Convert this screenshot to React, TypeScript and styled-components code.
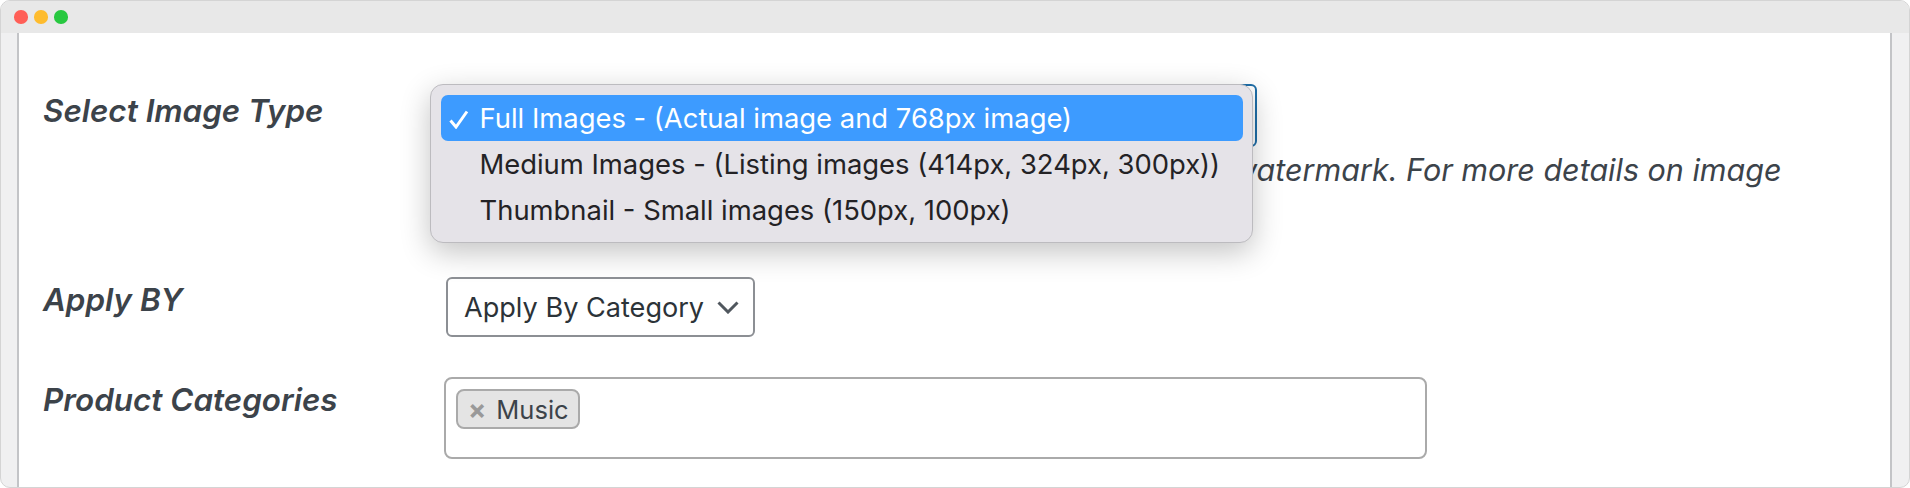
import { FC } from 'react'
import styled, { createGlobalStyle } from 'styled-components'

const Global = createGlobalStyle`
  html, body {
    margin: 0;
    padding: 0;
    background: #fff;
  }
  body {
    font-family: Inter, "Liberation Sans", sans-serif;
    color: #3c434a;
  }
`

const Window = styled.div`
  box-sizing: border-box;
  display: flex;
  flex-direction: column;
  width: 1910px;
  height: 488px;
  border: 1px solid #d4d4d4;
  border-radius: 10px;
  overflow: hidden;
  background: #f0f0f1;
`

const TitleBar = styled.div`
  display: flex;
  align-items: center;
  gap: 6.6px;
  flex: none;
  height: 32px;
  padding-left: 13px;
  background: #e8e8e8;
`

const Light = styled.span<{ $color: string }>`
  width: 13.6px;
  height: 13.6px;
  border-radius: 50%;
  background: ${p => p.$color};
`

const Panel = styled.main`
  flex: 1;
  margin: 0 17px 0 16px;
  padding: 51px 0 0 24px;
  background: #fff;
  border-left: 2px solid #c3c4c7;
  border-right: 2px solid #c3c4c7;
`

const Row = styled.div<{ $height: number }>`
  display: grid;
  grid-template-columns: 403px 1fr;
  height: ${p => p.$height}px;
`

const Label = styled.div<{ $top: number }>`
  padding-top: ${p => p.$top}px;
  font-size: 31.4px;
  line-height: 40px;
  font-weight: 600;
  font-style: italic;
  color: #3c434a;
  white-space: nowrap;
`

const Field = styled.div`
  position: relative;
`

const FocusSelect = styled.div`
  box-sizing: border-box;
  width: 811px;
  height: 63px;
  border: 2.5px solid #1f6ea8;
  border-radius: 6px;
`

const Description = styled.p`
  margin: 3px 0 0 3px;
  font-size: 30.5px;
  line-height: 40px;
  font-style: italic;
  color: #3c434a;
  white-space: nowrap;
`

const Popup = styled.div`
  position: absolute;
  top: 0;
  left: -16px;
  box-sizing: border-box;
  width: 823px;
  height: 159px;
  padding: 10px 9.5px;
  background: #e5e3e8;
  border: 1px solid #bcbbbf;
  border-radius: 13px;
  box-shadow: 0 9px 30px rgba(0, 0, 0, 0.24);
`

const Option = styled.div<{ $selected?: boolean }>`
  position: relative;
  height: 46px;
  padding-left: 39px;
  border-radius: 7px;
  font-size: 27.4px;
  line-height: 46px;
  white-space: nowrap;
  color: ${p => (p.$selected ? '#fff' : '#232225')};
  background: ${p => (p.$selected ? '#3d9bff' : 'transparent')};
`

const Check = styled.svg`
  position: absolute;
  left: 8px;
  top: 15px;
  width: 20px;
  height: 19px;
`

const ApplySelect = styled.div`
  box-sizing: border-box;
  display: flex;
  align-items: center;
  justify-content: space-between;
  width: 309px;
  height: 60px;
  padding: 0 14px 0 16px;
  border: 2px solid #8c8f94;
  border-radius: 6px;
  font-size: 27.1px;
  color: #2c3338;
  white-space: nowrap;
`

const Chevron = styled.svg`
  width: 22px;
  height: 13px;
`

const MultiSelect = styled.div`
  box-sizing: border-box;
  width: 983px;
  height: 82px;
  margin-left: -2px;
  padding: 10px;
  border: 2px solid #aaa;
  border-radius: 8px;
`

const Tag = styled.span`
  box-sizing: border-box;
  display: inline-flex;
  align-items: center;
  gap: 10px;
  height: 40px;
  padding: 0 9px 0 10px;
  background: #e4e4e4;
  border: 2px solid #aaa;
  border-radius: 8px;
  font-size: 25.5px;
  color: #3c434a;
`

const Remove = styled.span`
  font-size: 27px;
  font-weight: 700;
  line-height: 1;
  color: #999;
`

const options = [
  'Full Images - (Actual image and 768px image)',
  'Medium Images - (Listing images (414px, 324px, 300px))',
  'Thumbnail - Small images (150px, 100px)',
]

const App: FC = () => (
  <>
    <Global />
    <Window>
      <TitleBar>
        <Light $color="#ff5f57" />
        <Light $color="#febc2e" />
        <Light $color="#28c840" />
      </TitleBar>
      <Panel>
        <Row $height={193}>
          <Label $top={7}>Select Image Type</Label>
          <Field>
            <FocusSelect />
            <Description>
              Select the image type on which you want to apply the watermark. For more details on image
            </Description>
            <Popup>
              {options.map((option, i) => (
                <Option key={option} $selected={i === 0}>
                  {i === 0 && (
                    <Check viewBox="0 0 20 19" fill="none" stroke="#fff" strokeWidth="3">
                      <path d="M1.5 10.5 7 17 18 1.5" />
                    </Check>
                  )}
                  {option}
                </Option>
              ))}
            </Popup>
          </Field>
        </Row>
        <Row $height={100}>
          <Label $top={3}>Apply BY</Label>
          <Field>
            <ApplySelect>
              Apply By Category
              <Chevron viewBox="0 0 22 13" fill="none" stroke="#50575e" strokeWidth="3">
                <path d="M1.5 1.5 11 11l9.5-9.5" />
              </Chevron>
            </ApplySelect>
          </Field>
        </Row>
        <Row $height={90}>
          <Label $top={3}>Product Categories</Label>
          <Field>
            <MultiSelect>
              <Tag>
                <Remove>×</Remove>
                Music
              </Tag>
            </MultiSelect>
          </Field>
        </Row>
      </Panel>
    </Window>
  </>
)

export default App
